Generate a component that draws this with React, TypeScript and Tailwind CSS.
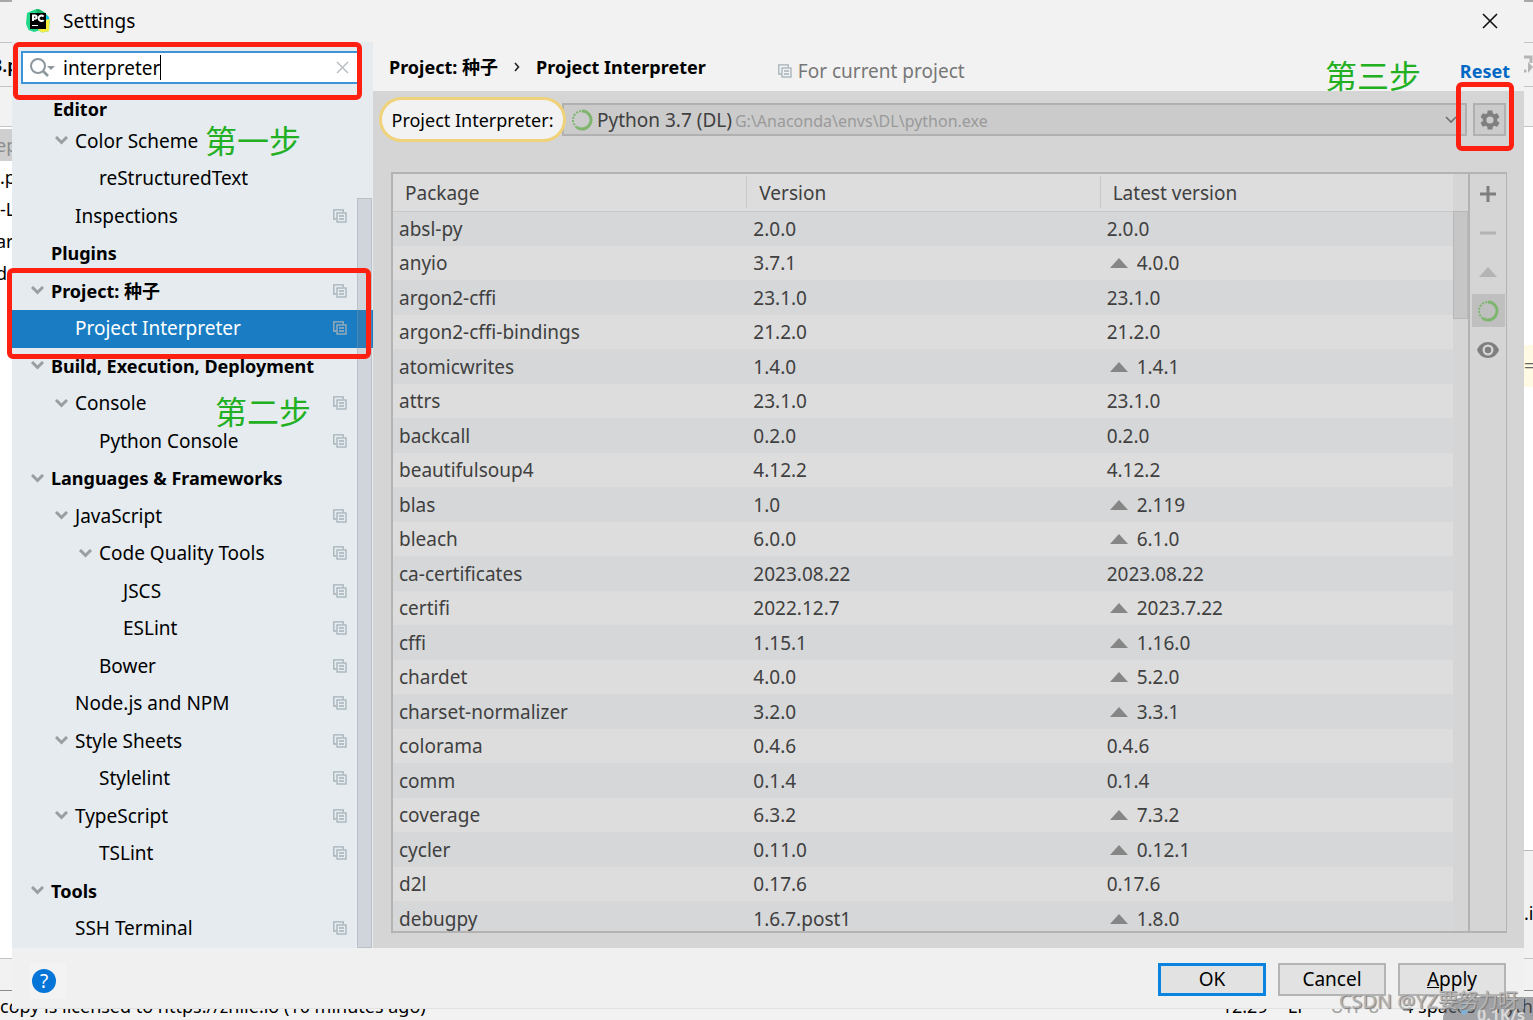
import { ReactNode } from "react";
import { clsx } from "clsx";

interface TreeNode {
  label: string;
  level: 0 | 1 | 2 | 3;
  expanded?: boolean;
  perProject?: boolean;
  selected?: boolean;
}

interface PackageRow {
  name: string;
  version: string;
  latest: string;
  outdated?: boolean;
}

const treeNodes: TreeNode[] = [
  { label: "Color Scheme", level: 1, expanded: true },
  { label: "reStructuredText", level: 2 },
  { label: "Inspections", level: 1, perProject: true },
  { label: "Plugins", level: 0 },
  { label: "Project: 种子", level: 0, expanded: true, perProject: true },
  { label: "Project Interpreter", level: 1, perProject: true, selected: true },
  { label: "Build, Execution, Deployment", level: 0, expanded: true },
  { label: "Console", level: 1, expanded: true, perProject: true },
  { label: "Python Console", level: 2, perProject: true },
  { label: "Languages & Frameworks", level: 0, expanded: true },
  { label: "JavaScript", level: 1, expanded: true, perProject: true },
  { label: "Code Quality Tools", level: 2, expanded: true, perProject: true },
  { label: "JSCS", level: 3, perProject: true },
  { label: "ESLint", level: 3, perProject: true },
  { label: "Bower", level: 2, perProject: true },
  { label: "Node.js and NPM", level: 1, perProject: true },
  { label: "Style Sheets", level: 1, expanded: true, perProject: true },
  { label: "Stylelint", level: 2, perProject: true },
  { label: "TypeScript", level: 1, expanded: true, perProject: true },
  { label: "TSLint", level: 2, perProject: true },
  { label: "Tools", level: 0, expanded: true },
  { label: "SSH Terminal", level: 1, perProject: true },
];

const packages: PackageRow[] = [
  { name: "absl-py", version: "2.0.0", latest: "2.0.0" },
  { name: "anyio", version: "3.7.1", latest: "4.0.0", outdated: true },
  { name: "argon2-cffi", version: "23.1.0", latest: "23.1.0" },
  { name: "argon2-cffi-bindings", version: "21.2.0", latest: "21.2.0" },
  { name: "atomicwrites", version: "1.4.0", latest: "1.4.1", outdated: true },
  { name: "attrs", version: "23.1.0", latest: "23.1.0" },
  { name: "backcall", version: "0.2.0", latest: "0.2.0" },
  { name: "beautifulsoup4", version: "4.12.2", latest: "4.12.2" },
  { name: "blas", version: "1.0", latest: "2.119", outdated: true },
  { name: "bleach", version: "6.0.0", latest: "6.1.0", outdated: true },
  { name: "ca-certificates", version: "2023.08.22", latest: "2023.08.22" },
  { name: "certifi", version: "2022.12.7", latest: "2023.7.22", outdated: true },
  { name: "cffi", version: "1.15.1", latest: "1.16.0", outdated: true },
  { name: "chardet", version: "4.0.0", latest: "5.2.0", outdated: true },
  { name: "charset-normalizer", version: "3.2.0", latest: "3.3.1", outdated: true },
  { name: "colorama", version: "0.4.6", latest: "0.4.6" },
  { name: "comm", version: "0.1.4", latest: "0.1.4" },
  { name: "coverage", version: "6.3.2", latest: "7.3.2", outdated: true },
  { name: "cycler", version: "0.11.0", latest: "0.12.1", outdated: true },
  { name: "d2l", version: "0.17.6", latest: "0.17.6" },
  { name: "debugpy", version: "1.6.7.post1", latest: "1.8.0", outdated: true },
];

const indent = {
  0: "pl-[19px]",
  1: "pl-[43px]",
  2: "pl-[67px]",
  3: "pl-[91px]",
};

const PyCharmLogo = () => (
  <svg width="24" height="24" viewBox="0 0 24 24" aria-hidden="true">
    <path d="M1 4l8-3.500 3-.5 6 3 5 5 .5 4L23 22l-7 1.500-3-2-5 1.500-5.500-2L0 15z" fill="#21d789" />
    <path d="M10 0l4 .5L19 4l-8 1z" fill="#18b46b" />
    <path d="M18 3.500l5 5.500v4l-4-1z" fill="#07c3f2" />
    <path d="M19 11l4.500-1L23 22l-7 1.500-4-3z" fill="#f5ee3c" />
    <rect x="4" y="4" width="16" height="16" fill="#000" />
    <g fill="none" stroke="#fff" strokeWidth="2">
      <path d="M7 12V6.500h2a1.600 1.600 0 0 1 0 3.200H7" />
      <path d="M17.600 7.500a2.800 2.800 0 1 0 0 3.600" />
    </g>
    <rect x="6" y="16" width="6" height="1" fill="#fff" />
  </svg>
);

const CopyIcon = () => (
  <svg className="shrink-0" width="14" height="14" viewBox="0 0 14 14" aria-hidden="true">
    <g fill="none" stroke="#a4b1b9" strokeWidth="1.300">
      <path d="M3.500 10H.8V.8h9.400v2.400" />
      <rect x="4" y="4" width="9" height="9" />
      <path d="M6 7h5M6 10h5" />
    </g>
  </svg>
);

const Chevron = () => (
  <svg width="13" height="9" viewBox="0 0 13 9" aria-hidden="true">
    <path d="M1 1l5.500 5.500L12 1" fill="none" stroke="#9a9ea0" strokeWidth="3" />
  </svg>
);

const Spinner = () => (
  <svg className="shrink-0" width="22" height="22" viewBox="0 0 22 22" aria-hidden="true">
    <g fill="none" stroke="#7fb56f" strokeWidth="3">
      <path d="M11 2a9 9 0 1 1-5 16.500" />
      <path d="M6 18.500A9 9 0 0 1 11 2" strokeWidth="2" strokeDasharray="2 1.300" />
    </g>
  </svg>
);

const GearIcon = () => (
  <svg width="20" height="20" viewBox="2 2 20 20" fill="#7f7f7f" aria-hidden="true">
    <path d="M19.140 12.940c.04-.3.060-.61.060-.94s-.02-.64-.070-.94l2.030-1.580a.49.490 0 0 0 .12-.61l-1.920-3.320a.49.490 0 0 0-.59-.22l-2.390.96a7 7 0 0 0-1.620-.94l-.36-2.540a.48.480 0 0 0-.48-.41h-3.840a.47.470 0 0 0-.47.41l-.36 2.540c-.59.240-1.130.57-1.620.94l-2.390-.96a.47.470 0 0 0-.59.220L2.740 8.870a.47.470 0 0 0 .12.610l2.030 1.580a6 6 0 0 0 0 1.880l-2.030 1.580a.49.490 0 0 0-.12.610l1.920 3.320c.12.220.37.290.59.220l2.390-.96c.5.380 1.030.7 1.620.94l.36 2.540c.05.240.24.410.48.410h3.840c.24 0 .44-.17.470-.41l.36-2.540a7 7 0 0 0 1.620-.94l2.390.96c.22.080.47 0 .59-.22l1.920-3.320a.47.470 0 0 0-.12-.61zM12 15.600a3.600 3.600 0 1 1 0-7.200 3.600 3.600 0 0 1 0 7.200z" />
  </svg>
);

const EyeIcon = () => (
  <svg width="22" height="18" viewBox="0 0 22 18" aria-hidden="true">
    <path d="M0 9c2-5 6-8 11-8s9 3 11 8c-2 5-6 8-11 8S2 14 0 9z" fill="#7f7f7f" />
    <circle cx="11" cy="9" r="5.500" fill="#d5d5d5" />
    <circle cx="11" cy="9" r="3.200" fill="#7f7f7f" />
  </svg>
);

const UpgradeArrow = () => (
  <svg width="18" height="10" viewBox="0 0 18 10" aria-hidden="true">
    <path d="M0 10 9 0l9 10z" fill="#868686" />
  </svg>
);

const ToolButton = ({ label, active, children }: { label: string; active?: boolean; children: ReactNode }) => (
  <button
    aria-label={label}
    className={clsx("flex h-[33px] w-[33px] items-center justify-center", active && "bg-[#bfbfbf]")}
  >
    {children}
  </button>
);

const dialogButton = "h-[33px] w-[108px] bg-[#e2e2e2] leading-6";

// The IDE window that stays partly visible around the dialog
const IdeBackground = () => (
  <div className="absolute inset-0 flex flex-col bg-white text-[18px] leading-6">
    <div className="h-[43px] border-t-2 border-b border-t-[#a8a8a8] border-b-[#c4c4c4] bg-[#f2f2f2]" />
    <div className="flex h-11 items-center justify-between overflow-hidden border-b border-[#c4c4c4] bg-[#f2f2f2]">
      <span className="-ml-2 font-semibold">3.py</span>
      <svg width="9" height="22" viewBox="0 0 9 22" aria-hidden="true">
        <path d="M0 3h7v6M0 16l2 2" fill="none" stroke="#b5b5b5" strokeWidth="3" />
        <path d="M4 8l5 5-5 6z" fill="#b5b5b5" />
      </svg>
    </div>
    <div className="h-10 shrink-0 border-b border-[#c4c4c4] bg-[#f2f2f2]" />
    <div className="flex min-h-0 flex-1 justify-between">
      <div className="flex w-10 flex-col overflow-hidden pt-[2px] whitespace-nowrap">
        <span className="flex h-8 items-center bg-[#cfcfcf] text-[#8c8c8c]">
          <span className="-ml-1">ep</span>
        </span>
        <span className="flex h-8 items-center">.py</span>
        <span className="flex h-8 items-center">-L</span>
        <span className="-ml-1 flex h-8 items-center">ar</span>
        <span className="-ml-1 flex h-8 items-center">d</span>
      </div>
      <div className="flex w-[9px] flex-col overflow-hidden pt-[218px]">
        <span className="h-[42px] bg-[#fffae3] pt-2 text-[#666]">=</span>
        <span className="mt-auto h-[108px] border-t border-[#b8b8b8] bg-[#f2f2f2] pt-[50px] leading-6">.i</span>
      </div>
    </div>
    <div className="h-[33px] border-y border-t-[#c4c4c4] border-b-[#8a8a8a] bg-[#f2f2f2]" />
    <div className="flex h-[29px] items-center overflow-hidden bg-[#f2f2f2] whitespace-nowrap">
      <span>copy is licensed to https://zhile.io (10 minutes ago)</span>
      <span className="ml-auto">12:29</span>
      <span className="ml-5">LF</span>
      <span className="ml-6 text-[#a0a0a0]">UTF-8</span>
      <span className="ml-6">4 spaces</span>
      <span className="ml-5">Pyth</span>
    </div>
  </div>
);

const SettingsTree = () => (
  <aside className="relative flex w-[361px] shrink-0 flex-col bg-[#e5ebef]">
    <div className="mt-[9px] mr-[11px] ml-[9px] flex h-[33px] shrink-0 items-center border-2 border-[#3d94d6] bg-white pr-[11px] pl-[7px]">
      <svg className="shrink-0" width="26" height="20" viewBox="0 0 26 20" aria-hidden="true">
        <g fill="none" stroke="#8d989e">
          <circle cx="8" cy="8" r="7" strokeWidth="2" />
          <path d="M13 13l5 5" strokeWidth="2.600" />
        </g>
        <path d="M17 8h8l-4 4z" fill="#8d989e" />
      </svg>
      <label htmlFor="search" className="sr-only">Search settings</label>
      <div className="ml-[7px] flex min-w-0 flex-1 items-center">
        <input
          id="search"
          defaultValue="interpreter"
          className="min-w-0 field-sizing-content bg-transparent outline-none"
        />
        <span className="h-[25px] w-px bg-black" />
      </div>
      <button aria-label="Clear search">
        <svg width="13" height="13" viewBox="0 0 13 13" aria-hidden="true">
          <path d="M1 1l11 11M12 1L1 12" stroke="#b9bfc3" strokeWidth="1.500" />
        </svg>
      </button>
    </div>
    <div className="mt-[11px] flex h-7 shrink-0 items-center pl-[41px] text-[18px] font-bold">Editor</div>
    <ul className="min-h-0 flex-1 overflow-hidden">
      {treeNodes.map((node) => (
        <li key={node.label} className="odd:h-[37px] even:h-[38px]">
          <button
            className={clsx(
              "flex h-full w-full items-center pr-[26px] pb-[2px] text-left whitespace-nowrap",
              indent[node.level],
              node.level === 0 && "text-[18px] font-bold",
              node.selected && "bg-[#1a7dc4] text-white"
            )}
          >
            <span className="w-5 shrink-0">{node.expanded && <Chevron />}</span>
            <span className="flex-1">{node.label}</span>
            {node.perProject && <CopyIcon />}
          </button>
        </li>
      ))}
    </ul>
    <div className="absolute top-[156px] right-px bottom-0 w-[15px] border border-[#8f96a0]/30 bg-[#7c7c8a]/20" />
  </aside>
);

const PackageTable = () => (
  <div className="mr-[17px] mb-[15px] ml-[18px] flex min-h-0 flex-1 overflow-hidden border-2 border-r border-[#b3b3b3]">
    <div className="min-w-0 flex-1 overflow-hidden">
      <table className="w-full table-fixed border-collapse text-left text-[#404040]">
        <thead>
          <tr className="h-[37px] border-b border-[#c8c8c8] bg-[#dddddd]">
            {["Package", "Version", "Latest version"].map((title, index) => (
              <th key={title} className="w-1/3 p-0 font-normal">
                <div className={clsx("h-8 pl-3 leading-[34px]", index > 0 && "border-l border-[#c8c8c8]")}>{title}</div>
              </th>
            ))}
          </tr>
        </thead>
        <tbody>
          {packages.map((pkg) => (
            <tr key={pkg.name} className="odd:h-[35px] odd:bg-[#d5d7d9] even:h-[34px] even:bg-[#dddddd]">
              <td className="p-0 pl-[6px]">{pkg.name}</td>
              <td className="p-0 pl-[7px]">{pkg.version}</td>
              <td className="p-0 pl-[7px]">
                <span className="flex items-center">
                  {pkg.outdated && (
                    <span className="w-[30px] pl-[3px]">
                      <UpgradeArrow />
                    </span>
                  )}
                  {pkg.latest}
                </span>
              </td>
            </tr>
          ))}
        </tbody>
      </table>
    </div>
    <div className="w-[15px] pt-[37px]">
      <div className="h-[108px] border border-[#b8b8b8] bg-[#c6c6c6]" />
    </div>
    <div className="flex w-[38px] flex-col items-center gap-[6px] border-l-2 border-[#b3b3b3] pt-[3px]">
      <ToolButton label="Install package">
        <svg width="16" height="16" viewBox="0 0 16 16" aria-hidden="true">
          <path d="M8 0v16M0 8h16" stroke="#7f7f7f" strokeWidth="3" />
        </svg>
      </ToolButton>
      <ToolButton label="Uninstall package">
        <svg width="16" height="16" viewBox="0 0 16 16" aria-hidden="true">
          <path d="M0 8h16" stroke="#b3b3b3" strokeWidth="3" />
        </svg>
      </ToolButton>
      <ToolButton label="Upgrade package">
        <svg width="18" height="10" viewBox="0 0 18 10" aria-hidden="true">
          <path d="M0 10 9 0l9 10z" fill="#b3b3b3" />
        </svg>
      </ToolButton>
      <ToolButton label="Conda package manager" active>
        <Spinner />
      </ToolButton>
      <ToolButton label="Show early releases">
        <EyeIcon />
      </ToolButton>
    </div>
  </div>
);

const InterpreterPage = () => (
  <main className="flex min-w-0 flex-1 flex-col">
    <div className="flex h-[49px] shrink-0 items-center pr-[14px] pl-4 whitespace-nowrap">
      <nav className="flex items-center text-[18px] font-bold">
        <span>Project: 种子</span>
        <svg className="mx-4" width="6" height="10" viewBox="0 0 6 10" aria-hidden="true">
          <path d="M1 1l3.500 4L1 9" fill="none" stroke="#222" strokeWidth="1.600" />
        </svg>
        <span>Project Interpreter</span>
      </nav>
      <span className="ml-[72px] flex items-center gap-[6px] pt-2 text-[#777]">
        <CopyIcon />
        For current project
      </span>
      <a href="#reset" className="ml-auto pt-2 text-[18px] font-bold text-[#0068c4]">Reset</a>
    </div>
    <div className="flex min-h-0 flex-1 flex-col bg-[#d5d5d5]">
      <div className="mt-[6px] mr-[18px] mb-[30px] ml-[6px] flex h-[45px] shrink-0 items-center">
        <label
          htmlFor="interpreter"
          className="z-10 -mr-1 flex h-full w-[187px] shrink-0 items-center justify-center rounded-full border-3 border-[#efd27a] bg-[#f2f2f2] text-[18px] whitespace-nowrap"
        >
          Project Interpreter:
        </label>
        <div className="flex h-[33px] min-w-0 flex-1 items-center border-2 border-[#b0b0b0] bg-[#cbcbcb] pr-2 pl-[7px]">
          <Spinner />
          <select
            id="interpreter"
            className="ml-1 field-sizing-content appearance-none bg-transparent text-[#404040]"
          >
            <option>Python 3.7 (DL)</option>
          </select>
          <span className="ml-[3px] pt-[2px] text-[16px] text-[#9a9a9a]">G:\Anaconda\envs\DL\python.exe</span>
          <svg className="ml-auto" width="12" height="8" viewBox="0 0 12 8" aria-hidden="true">
            <path d="M1 1l5 5 5-5" fill="none" stroke="#6e6e6e" strokeWidth="1.600" />
          </svg>
        </div>
        <button
          aria-label="Interpreter settings"
          className="ml-[6px] flex h-[33px] w-[33px] shrink-0 items-center justify-center border-2 border-[#b0b0b0] bg-[#cbcbcb]"
        >
          <GearIcon />
        </button>
      </div>
      <PackageTable />
    </div>
  </main>
);

const App = () => {
  return (
    <div className="relative flex h-screen overflow-hidden font-['Noto_Sans','Noto_Sans_CJK_SC',sans-serif] text-[19px] leading-6 text-black">
      <IdeBackground />

      <div className="relative mr-[9px] mb-[11px] ml-3 flex min-w-0 flex-1 flex-col bg-[#f2f2f2]">
        <header className="flex h-[42px] shrink-0 items-center pr-[26px] pl-[14px]">
          <PyCharmLogo />
          <h1 className="ml-[13px]">Settings</h1>
          <button aria-label="Close" className="ml-auto">
            <svg width="16" height="16" viewBox="0 0 16 16" aria-hidden="true">
              <path d="M1 1l14 14M15 1L1 15" stroke="#111" strokeWidth="1.600" />
            </svg>
          </button>
        </header>
        <div className="flex min-h-0 flex-1">
          <SettingsTree />
          <InterpreterPage />
        </div>
        <footer className="flex h-[61px] shrink-0 items-center gap-3 border-b border-[#e2e2e2] bg-[#f0f0f0] px-[18px] pt-[2px]">
          <button aria-label="Help" className="mt-1 mr-auto flex h-9 w-9 items-center bg-[#f3f3f3] pl-[2px]">
            <span className="flex h-6 w-6 items-center justify-center rounded-full bg-[#0675d8] text-white">?</span>
          </button>
          <button className={clsx(dialogButton, "border-3 border-[#0a84e0]")}>OK</button>
          <button className={clsx(dialogButton, "border-2 border-[#b4b4b4]")}>Cancel</button>
          <button className={clsx(dialogButton, "border-2 border-[#b4b4b4]")}>
            <span className="underline">A</span>pply
          </button>
        </footer>
      </div>

      {/* step annotations */}
      <div className="pointer-events-none absolute inset-0 font-['Noto_Sans_CJK_SC',sans-serif] text-[32px] leading-10 text-[#22b022]">
        <div className="absolute top-[42px] left-[13px] h-[58px] w-[349px] rounded-md border-5 border-[#ff2012]" />
        <div className="absolute top-[268px] left-[7px] h-[91px] w-[364px] rounded-md border-5 border-[#ff2012]" />
        <div className="absolute top-[82px] right-[19px] h-[69px] w-[58px] rounded-md border-5 border-[#ff2012]" />
        <span className="absolute top-[119px] left-[205px]">第一步</span>
        <span className="absolute top-[390px] left-[215px]">第二步</span>
        <span className="absolute top-[54px] right-[112px]">第三步</span>
      </div>

      {/* network speed widget and watermark */}
      <div className="absolute right-0 bottom-0 flex h-[23px] w-[90px] items-center gap-2 overflow-hidden rounded-tl-full bg-[#6a6d72]/60 pl-4 text-[16px] font-bold text-[#d8d8d8]">
        <svg className="shrink-0" width="10" height="14" viewBox="0 0 10 14" aria-hidden="true">
          <path d="M5 0v12M1 8l4 4 4-4" fill="none" stroke="#7db4dc" strokeWidth="2" />
        </svg>
        <span className="pt-3">0.1K/s</span>
      </div>
      <span className="absolute right-[15px] bottom-[7px] text-[20px] whitespace-nowrap text-[#b4b4b4] [text-shadow:1px_1px_1px_#777]">
        CSDN @YZ要努力呀
      </span>
    </div>
  );
};

export default App;
